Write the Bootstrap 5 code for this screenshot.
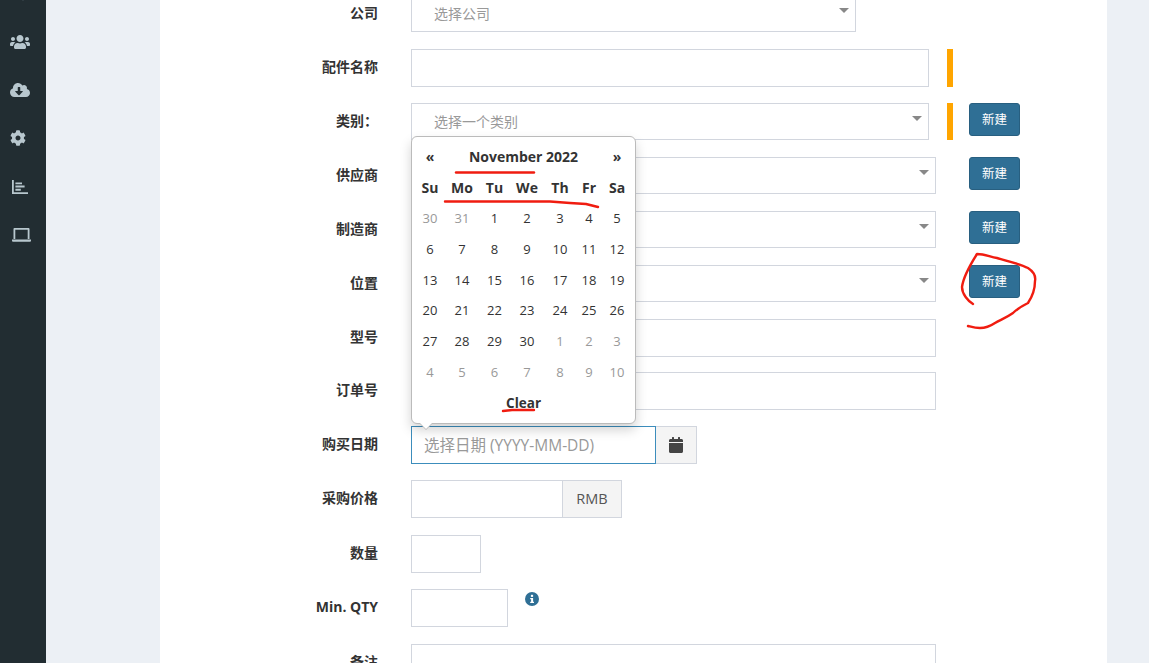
<!DOCTYPE html>
<html lang="zh">
<head>
<meta charset="utf-8">
<title>新建配件</title>
<link href="https://cdn.jsdelivr.net/npm/bootstrap@5.3.0/dist/css/bootstrap.min.css" rel="stylesheet">
<style>
html,body{height:663px;overflow:hidden}
body{background:#ecf0f5;color:#333;font-family:"Open Sans","Noto Sans CJK SC",sans-serif;font-size:14px}
.shell{height:663px;overflow:hidden;position:relative}
.side{width:46px;background:#222d32;flex:none;height:663px;overflow:hidden}
.side-in{margin-top:-30px}
.side-it{height:48px;flex:none;color:#b8c7ce}
.side-it svg{fill:currentColor;display:block}
.pl10{padding-left:10px}.pl11{padding-left:11px}.pl12{padding-left:12px}
.nudge{padding-top:2px}
.box{margin-left:114px;width:947px;background:#fff;height:700px;margin-top:-5px;flex:none}
.frow{height:38px;margin-bottom:16px;flex:none}
.frow.up{margin-top:-1px}
.frow.dn{margin-top:1px}
.flabel{width:218px;flex:none;margin-right:33px;text-align:right;font-weight:700;font-size:14px;color:#333;padding-top:8px;line-height:20px}
.fld{border:1px solid #d2d6de;border-radius:0;background:#fff;height:38px;padding:6px 12px;font-size:14px;box-shadow:none}
.fsel{height:37px;position:relative;color:#999;font-size:14px;padding:7px 22px;line-height:21px;border:1px solid #d2d6de;background:#fff}
.fsel::after{content:"";position:absolute;right:6px;top:12px;border-style:solid;border-width:5px 5px 0 5px;border-color:#888 transparent transparent transparent}
.w70{width:70px}.w97{width:97px}.w445{width:445px}.w518{width:518px}.w525{width:525px}
.igd{width:286px}.igp{width:211px}
.igd .form-control,.igp .form-control{border-color:#d2d6de;border-radius:0;height:38px;font-size:15.5px}
.igd .form-control{width:245px;flex:none;border-color:#3c8dbc;color:#999}
.igd .form-control::placeholder{color:#999}
.igd .input-group-text,.igp .input-group-text{background:#f4f4f4;border-color:#d2d6de;border-radius:0;color:#555;font-size:14.5px;height:38px}
.igd .input-group-text{width:42px;justify-content:center;padding:0}
.igp .input-group-text{width:60px;justify-content:center;padding:0}
.mbar{width:6px;height:38px;background:#ffa500;margin-left:18px;flex:none}
.mbar.s{height:37px}
.bnew{width:51px;height:33px;background:#2f6f95;border:1px solid #285f80;color:#fff;font-size:12.5px;padding:2px 0 0;border-radius:3px;line-height:1;flex:none}
.bnew:hover{background:#2f6f95;color:#fff}
.ml33{margin-left:33px}.ml16{margin-left:16px}
.info{margin-left:17px;margin-top:3px;flex:none}
.dpk{position:absolute;left:411px;top:136px;width:225px;height:288px;background:#fff;border:1px solid #bbb;border-radius:6px;box-shadow:0 6px 12px rgba(0,0,0,.175);padding:5px 3px 4px;z-index:5}
.dpk::before{content:"";position:absolute;left:7px;top:100%;border-style:solid;border-width:7px 7px 0 7px;border-color:#bbb transparent transparent transparent}
.dpk::after{content:"";position:absolute;left:8px;top:100%;border-style:solid;border-width:6px 6px 0 6px;border-color:#fff transparent transparent transparent}
.cal{table-layout:fixed;width:217px;border-collapse:collapse;font-size:13px;color:#333}
.cal td,.cal th{height:30.7px;padding:0;text-align:center;vertical-align:middle;line-height:1}
.cal th{font-weight:700;font-size:14px}
.cal .c1{width:30px}.cal .c2{width:34px}.cal .c3{width:31px}.cal .c4{width:34px}.cal .c5{width:32px}.cal .c6{width:26px}.cal .c7{width:30px}
.cal .old{color:#999}
.cal .clr{font-size:13.500px;padding-top:1px}
.inkk{position:absolute;left:0;top:0;z-index:9;pointer-events:none}
</style>
</head>
<body>
<div class="shell d-flex">
  <nav class="side">
    <div class="side-in d-flex flex-column">
      <div class="side-it d-flex align-items-center justify-content-center"><svg width="6" height="14" viewBox="0 0 6 14"><path d="M0 0h6L3 14z"/></svg></div>
      <div class="side-it d-flex align-items-center pl10"><svg width="20" height="16" viewBox="0 0 640 512"><path d="M96 224c35.3 0 64-28.7 64-64s-28.7-64-64-64-64 28.7-64 64 28.7 64 64 64zm448 0c35.3 0 64-28.7 64-64s-28.7-64-64-64-64 28.7-64 64 28.7 64 64 64zm32 32h-64c-17.6 0-33.5 7.1-45.1 18.6 40.3 22.1 68.9 62 75.1 109.4h66c17.7 0 32-14.3 32-32v-32c0-35.3-28.7-64-64-64zm-256 0c61.9 0 112-50.1 112-112S381.9 32 320 32 208 82.1 208 144s50.1 112 112 112zm76.8 32h-8.3c-20.8 10-43.9 16-68.5 16s-47.6-6-68.5-16h-8.3C179.6 288 128 339.6 128 403.2V432c0 26.5 21.5 48 48 48h288c26.5 0 48-21.5 48-48v-28.8c0-63.6-51.6-115.2-115.2-115.2zm-223.7-13.4C161.5 263.1 145.6 256 128 256H64c-35.3 0-64 28.7-64 64v32c0 17.7 14.3 32 32 32h65.9c6.3-47.4 34.9-87.3 75.2-109.4z"/></svg></div>
      <div class="side-it d-flex align-items-center pl10"><svg width="20" height="16" viewBox="0 0 640 512"><path d="M537.6 226.6c4.1-10.7 6.4-22.4 6.4-34.6 0-53-43-96-96-96-19.7 0-38.1 6-53.3 16.2C367 64.2 315.3 32 256 32c-88.4 0-160 71.6-160 160 0 2.7.1 5.4.2 8.1C40.2 219.8 0 273.2 0 336c0 79.5 64.5 144 144 144h368c70.7 0 128-57.3 128-128 0-61.9-44-113.6-102.4-125.4zm-132.9 88.7L299.3 420.7c-6.2 6.2-16.4 6.2-22.6 0L171.3 315.3c-10.1-10.1-2.9-27.3 11.3-27.3H248V176c0-8.8 7.2-16 16-16h48c8.8 0 16 7.2 16 16v112h65.4c14.2 0 21.4 17.2 11.3 27.3z"/></svg></div>
      <div class="side-it d-flex align-items-center pl10"><svg width="16" height="16" viewBox="0 0 512 512"><path d="M487.4 315.7l-42.6-24.6c4.3-23.2 4.3-47 0-70.2l42.6-24.6c4.9-2.8 7.1-8.6 5.5-14-11.1-35.6-30-67.8-54.7-94.6-3.8-4.1-10-5.1-14.8-2.3L380.8 110c-17.9-15.4-38.5-27.3-60.8-35.1V25.8c0-5.6-3.9-10.5-9.4-11.7-36.7-8.2-74.3-7.8-109.2 0-5.5 1.2-9.4 6.1-9.4 11.7V75c-22.2 7.9-42.8 19.8-60.8 35.1L88.7 85.5c-4.9-2.8-11-1.9-14.8 2.3-24.7 26.7-43.6 58.9-54.7 94.6-1.7 5.4.6 11.2 5.5 14L67.3 221c-4.3 23.2-4.3 47 0 70.2l-42.6 24.6c-4.9 2.8-7.1 8.6-5.5 14 11.1 35.6 30 67.8 54.7 94.6 3.8 4.1 10 5.1 14.8 2.3l42.6-24.6c17.9 15.4 38.5 27.3 60.8 35.1v49.2c0 5.6 3.9 10.5 9.4 11.7 36.7 8.2 74.3 7.8 109.2 0 5.5-1.2 9.4-6.1 9.4-11.7v-49.2c22.2-7.9 42.8-19.8 60.8-35.1l42.6 24.6c4.9 2.8 11 1.9 14.8-2.3 24.7-26.7 43.6-58.9 54.7-94.6 1.5-5.5-.7-11.3-5.6-14.1zM256 336c-44.1 0-80-35.9-80-80s35.9-80 80-80 80 35.9 80 80-35.9 80-80 80z"/></svg></div>
      <div class="side-it d-flex align-items-center pl12 nudge"><svg width="16" height="14" viewBox="0 0 16 14"><path d="M0 0h1.8v12.2H16V14H0zM3.4 2.400h6.600v1.900H3.400zM3.4 5.600h9.200v1.900H3.400zM3.4 8.800h5.400v1.900H3.400z"/></svg></div>
      <div class="side-it d-flex align-items-center pl12 nudge"><svg width="19" height="14" viewBox="0 0 19 14"><path d="M2.4 0h14.2a.9.9 0 0 1 .9.9V11h-1.8V1.700H3.300V11H1.500V.9a.9.9 0 0 1 .9-.9zM0 11.600h19v1.200a1 1 0 0 1-1 1H1a1 1 0 0 1-1-1z"/></svg></div>
    </div>
  </nav>
  <main class="box">
    <form class="d-flex flex-column">
      <div class="frow d-flex"><label class="flabel">公司</label><div class="fsel w445">选择公司</div></div>
      <div class="frow d-flex"><label class="flabel">配件名称</label><input class="fld w518" type="text"><span class="mbar"></span></div>
      <div class="frow d-flex"><label class="flabel">类别：</label><div class="fsel w518">选择一个类别</div><span class="mbar s"></span><button type="button" class="btn bnew ml16">新建</button></div>
      <div class="frow d-flex"><label class="flabel">供应商</label><div class="fsel w525"></div><button type="button" class="btn bnew ml33">新建</button></div>
      <div class="frow d-flex"><label class="flabel">制造商</label><div class="fsel w525"></div><button type="button" class="btn bnew ml33">新建</button></div>
      <div class="frow d-flex"><label class="flabel">位置</label><div class="fsel w525"></div><button type="button" class="btn bnew ml33">新建</button></div>
      <div class="frow d-flex"><label class="flabel">型号</label><input class="fld w525" type="text"></div>
      <div class="frow d-flex up"><label class="flabel">订单号</label><input class="fld w525" type="text"></div>
      <div class="frow d-flex"><label class="flabel">购买日期</label>
        <div class="input-group igd flex-nowrap"><input class="form-control" type="text" placeholder="选择日期 (YYYY-MM-DD)"><span class="input-group-text"><svg width="14" height="16" viewBox="0 0 448 512" fill="#444"><path d="M0 464c0 26.5 21.5 48 48 48h352c26.5 0 48-21.5 48-48V192H0v272zM400 64h-48V16c0-8.800-7.200-16-16-16h-32c-8.800 0-16 7.200-16 16v48H160V16c0-8.800-7.200-16-16-16h-32c-8.800 0-16 7.200-16 16v48H48C21.500 64 0 85.500 0 112v48h448v-48c0-26.500-21.500-48-48-48z"/></svg></span></div>
      </div>
      <div class="frow d-flex"><label class="flabel">采购价格</label><div class="input-group igp flex-nowrap"><input class="form-control" type="text"><span class="input-group-text">RMB</span></div></div>
      <div class="frow d-flex dn"><label class="flabel">数量</label><input class="fld w70" type="text"></div>
      <div class="frow d-flex"><label class="flabel">Min. QTY</label><input class="fld w97" type="text"><svg class="info" width="14" height="14" viewBox="0 0 14 14"><circle cx="7" cy="7" r="7" fill="#2f6f95"/><rect x="5.900" y="2.800" width="2.200" height="2.100" fill="#fff"/><path d="M5.200 6h2.900v3.700h.9v1.300H5.200V9.700h.9V7.300h-.9z" fill="#fff"/></svg></div>
      <div class="frow d-flex dn"><label class="flabel">备注</label><input class="fld w525" type="text"></div>
    </form>
  </main>
  <div class="dpk">
    <table class="cal">
      <colgroup><col class="c1"><col class="c2"><col class="c3"><col class="c4"><col class="c5"><col class="c6"><col class="c7"></colgroup>
      <thead>
        <tr><th>«</th><th colspan="5">November 2022</th><th>»</th></tr>
        <tr><th>Su</th><th>Mo</th><th>Tu</th><th>We</th><th>Th</th><th>Fr</th><th>Sa</th></tr>
      </thead>
      <tbody>
        <tr><td class="old">30</td><td class="old">31</td><td>1</td><td>2</td><td>3</td><td>4</td><td>5</td></tr>
        <tr><td>6</td><td>7</td><td>8</td><td>9</td><td>10</td><td>11</td><td>12</td></tr>
        <tr><td>13</td><td>14</td><td>15</td><td>16</td><td>17</td><td>18</td><td>19</td></tr>
        <tr><td>20</td><td>21</td><td>22</td><td>23</td><td>24</td><td>25</td><td>26</td></tr>
        <tr><td>27</td><td>28</td><td>29</td><td>30</td><td class="old">1</td><td class="old">2</td><td class="old">3</td></tr>
        <tr><td class="old">4</td><td class="old">5</td><td class="old">6</td><td class="old">7</td><td class="old">8</td><td class="old">9</td><td class="old">10</td></tr>
      </tbody>
      <tfoot><tr><th colspan="7" class="clr">Clear</th></tr></tfoot>
    </table>
  </div>
  <svg class="inkk" width="1149" height="663" viewBox="0 0 1149 663" fill="none" stroke="#f01c10" stroke-width="2.400" stroke-linecap="round" stroke-linejoin="round">
    <path d="M456 172.500H534"/>
    <path d="M445 201.500H550L570 203L586 204L598 207"/>
    <path d="M503 411L512 410H534"/>
    <path d="M973 304C968 301 962 294 962 287C963 279 970 265 977 254C985 254 990 257 997 258C1008 261 1020 264 1028 268C1034 272 1036 276 1035 281C1035 290 1032 297 1028 303C1020 307 1016 310 1013 313C1006 318 1000 320 995 323C989 327 984 328 980 328C975 328 972 327 968 326"/>
  </svg>
</div>
</body>
</html>
